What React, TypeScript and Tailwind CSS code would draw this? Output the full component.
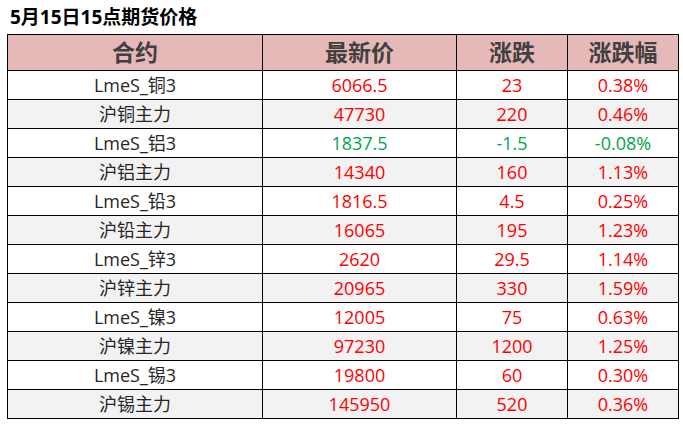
const rows: [string, string, string, string, boolean][] = [
  ["LmeS_铜3", "6066.5", "23", "0.38%", true],
  ["沪铜主力", "47730", "220", "0.46%", true],
  ["LmeS_铝3", "1837.5", "-1.5", "-0.08%", false],
  ["沪铝主力", "14340", "160", "1.13%", true],
  ["LmeS_铅3", "1816.5", "4.5", "0.25%", true],
  ["沪铅主力", "16065", "195", "1.23%", true],
  ["LmeS_锌3", "2620", "29.5", "1.14%", true],
  ["沪锌主力", "20965", "330", "1.59%", true],
  ["LmeS_镍3", "12005", "75", "0.63%", true],
  ["沪镍主力", "97230", "1200", "1.25%", true],
  ["LmeS_锡3", "19800", "60", "0.30%", true],
  ["沪锡主力", "145950", "520", "0.36%", true],
];

export default function App() {
  return (
    <div
      className="h-[428px] w-[683px] bg-white pl-[7px] pt-[7px]"
      style={{ fontFamily: '"Open Sans", "Noto Sans CJK SC", sans-serif' }}
    >
      <h1 className="pl-[3px] text-[19px] font-bold leading-[20px] text-black">
        5月15日15点期货价格
      </h1>
      <table className="mt-[7px] w-[671px] table-fixed border-collapse text-center">
        <colgroup>
          <col className="w-[255px]" />
          <col className="w-[194px]" />
          <col className="w-[111px]" />
          <col className="w-[111px]" />
        </colgroup>
        <thead>
          <tr className="h-[36px] bg-[#e6b8b7] text-[23px] font-bold text-[#404040]">
            <th className="border border-black p-0">合约</th>
            <th className="border border-black p-0">最新价</th>
            <th className="border border-black p-0">涨跌</th>
            <th className="border border-black p-0">涨跌幅</th>
          </tr>
        </thead>
        <tbody className="text-[18px] leading-none">
          {rows.map(([name, price, chg, pct, up], i) => {
            const color = up ? "text-[#ff0000]" : "text-[#00a550]";
            return (
              <tr key={name} className={`h-[29px] ${i % 2 === 1 ? "bg-[#f2f2f2]" : "bg-white"}`}>
                <td className="border border-black p-0 text-[#262626]">{name}</td>
                <td className={`border border-black p-0 ${color}`}>{price}</td>
                <td className={`border border-black p-0 ${color}`}>{chg}</td>
                <td className={`border border-black p-0 ${color}`}>{pct}</td>
              </tr>
            );
          })}
        </tbody>
      </table>
    </div>
  );
}
